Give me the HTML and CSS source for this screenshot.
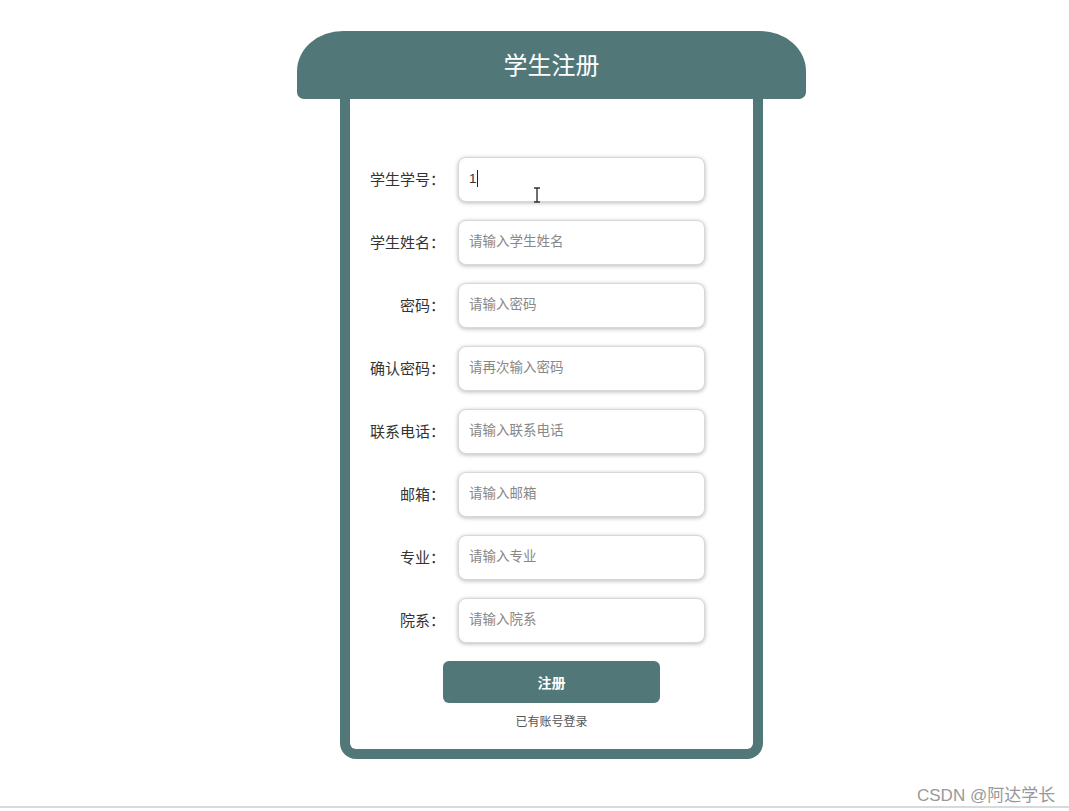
FILE: index.html
```html
<!DOCTYPE html>
<html lang="zh-CN">
<head>
<meta charset="utf-8">
<title>学生注册</title>
<link rel="stylesheet" href="styles.css">
</head>
<body>
<div class="page">
  <div class="register">
    <div class="register-head">学生注册</div>
    <form class="register-card">
      <div class="field">
        <label class="field-label">学生学号：</label>
        <div class="field-box">
          <input class="field-input" type="text" value="1">
          <span class="caret"></span>
          <svg class="ibeam" width="8" height="16" viewBox="0 0 8 16"><path d="M1 1h6M1 15h6M4 1v14" stroke="#333" stroke-width="1.4" fill="none"/></svg>
        </div>
      </div>
      <div class="field">
        <label class="field-label">学生姓名：</label>
        <div class="field-box"><input class="field-input" type="text" placeholder="请输入学生姓名"></div>
      </div>
      <div class="field">
        <label class="field-label">密码：</label>
        <div class="field-box"><input class="field-input" type="password" placeholder="请输入密码"></div>
      </div>
      <div class="field">
        <label class="field-label">确认密码：</label>
        <div class="field-box"><input class="field-input" type="password" placeholder="请再次输入密码"></div>
      </div>
      <div class="field">
        <label class="field-label">联系电话：</label>
        <div class="field-box"><input class="field-input" type="text" placeholder="请输入联系电话"></div>
      </div>
      <div class="field">
        <label class="field-label">邮箱：</label>
        <div class="field-box"><input class="field-input" type="text" placeholder="请输入邮箱"></div>
      </div>
      <div class="field">
        <label class="field-label">专业：</label>
        <div class="field-box"><input class="field-input" type="text" placeholder="请输入专业"></div>
      </div>
      <div class="field">
        <label class="field-label">院系：</label>
        <div class="field-box"><input class="field-input" type="text" placeholder="请输入院系"></div>
      </div>
      <button class="submit" type="button">注册</button>
      <a class="login-link">已有账号登录</a>
    </form>
  </div>
</div>
<div class="watermark">CSDN @阿达学长</div>
<div class="baseline"></div>
</body>
</html>
```

FILE: styles.css
```css
* { box-sizing: border-box; }

html, body {
  margin: 0;
  height: 100%;
  background: #fff;
  font-family: "Liberation Sans", "Noto Sans CJK SC", sans-serif;
  overflow: hidden;
}

.page {
  display: flex;
  justify-content: center;
  padding: 31px 0 0 34px;
}

.register {
  width: 509px;
  display: flex;
  flex-direction: column;
  align-items: center;
}

.register-head {
  width: 509px;
  height: 68px;
  padding-bottom: 4px;
  background: #527778;
  color: #fff;
  font-size: 24px;
  display: flex;
  align-items: center;
  justify-content: center;
  border-radius: 46px 46px 7px 7px / 40px 40px 7px 7px;
  position: relative;
  z-index: 1;
}

.register-card {
  width: 423px;
  height: 660px;
  margin: 0;
  border: 10px solid #527778;
  border-top: 0;
  border-radius: 0 0 16px 16px;
  padding: 58px 0 0 0;
  display: flex;
  flex-direction: column;
  align-items: stretch;
}

.field {
  display: flex;
  align-items: center;
  gap: 13px;
  margin-bottom: 18px;
}

.field-label {
  width: 95px;
  text-align: right;
  font-size: 15px;
  color: #333;
  white-space: nowrap;
  padding-bottom: 2px;
}

.field-box {
  position: relative;
  width: 247px;
  height: 45px;
}

.field-input {
  width: 100%;
  height: 100%;
  border: 1px solid #d8d8d8;
  border-radius: 8px;
  box-shadow: 0 1px 4px rgba(0, 0, 0, 0.28);
  padding: 0 10px 2px;
  font-family: inherit;
  font-size: 13.5px;
  color: #333;
  outline: none;
  background: #fff;
}

.field-input::placeholder {
  color: #888;
}

.caret {
  position: absolute;
  left: 19px;
  top: 13px;
  width: 1px;
  height: 17px;
  background: #222;
}

.ibeam {
  position: absolute;
  left: 75px;
  top: 30px;
}

.submit {
  align-self: center;
  width: 217px;
  height: 42px;
  margin-top: 0;
  padding-bottom: 2px;
  border: 0;
  border-radius: 6px;
  background: #527778;
  color: #fff;
  font-family: inherit;
  font-size: 14px;
  font-weight: bold;
}

.login-link {
  align-self: center;
  margin-top: 9px;
  font-size: 12px;
  color: #555;
}

.watermark {
  position: absolute;
  left: 917px;
  top: 781px;
  font-size: 17px;
  color: #999;
}

.baseline {
  position: absolute;
  left: 0;
  right: 0;
  top: 806px;
  height: 2px;
  background: #d9d9d9;
}
```
